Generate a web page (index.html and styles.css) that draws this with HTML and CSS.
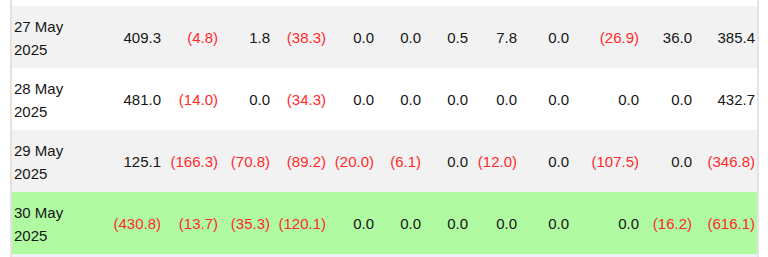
FILE: index.html
```html
<!DOCTYPE html>
<html lang="en">
<head>
<meta charset="utf-8">
<title>Daily table</title>
<link rel="stylesheet" href="styles.css">
</head>
<body>
<div class="table">
  <div class="row alt">
    <div class="date">27 May<br>2025</div>
    <div>409.3</div><div class="neg">(4.8)</div><div>1.8</div><div class="neg">(38.3)</div><div>0.0</div><div>0.0</div><div>0.5</div><div>7.8</div><div>0.0</div><div class="neg">(26.9)</div><div>36.0</div><div>385.4</div>
  </div>
  <div class="row">
    <div class="date">28 May<br>2025</div>
    <div>481.0</div><div class="neg">(14.0)</div><div>0.0</div><div class="neg">(34.3)</div><div>0.0</div><div>0.0</div><div>0.0</div><div>0.0</div><div>0.0</div><div>0.0</div><div>0.0</div><div>432.7</div>
  </div>
  <div class="row alt">
    <div class="date">29 May<br>2025</div>
    <div>125.1</div><div class="neg">(166.3)</div><div class="neg">(70.8)</div><div class="neg">(89.2)</div><div class="neg">(20.0)</div><div class="neg">(6.1)</div><div>0.0</div><div class="neg">(12.0)</div><div>0.0</div><div class="neg">(107.5)</div><div>0.0</div><div class="neg">(346.8)</div>
  </div>
  <div class="row hl">
    <div class="date">30 May<br>2025</div>
    <div class="neg">(430.8)</div><div class="neg">(13.7)</div><div class="neg">(35.3)</div><div class="neg">(120.1)</div><div>0.0</div><div>0.0</div><div>0.0</div><div>0.0</div><div>0.0</div><div>0.0</div><div class="neg">(16.2)</div><div class="neg">(616.1)</div>
  </div>
  <div class="row next"></div>
</div>
</body>
</html>
```
FILE: styles.css
```css
html, body {
  margin: 0;
  padding: 0;
  background: #ffffff;
}

body {
  font-family: "Liberation Sans", Arial, sans-serif;
  font-size: 15px;
  color: #161616;
}

.table {
  margin-left: 10px;
  width: 745px;
  padding-top: 6px;
  border-left: 2px solid #e6e2dd;
  border-right: 2px solid #e4e4e4;
}

.row {
  display: grid;
  grid-template-columns: 88px 63px 57px 52px 56px 48px 47px 47px 49px 52px 70px 53px 63px;
  height: 62px;
  align-items: center;
  line-height: 23px;
  background: #ffffff;
}

.row > div {
  text-align: right;
  padding-right: 2px;
  white-space: nowrap;
}

.row > .date {
  text-align: left;
  padding-left: 2px;
  padding-top: 2px;
}

.row.alt {
  background: #f2f2f2;
}

.row.hl {
  background: #b0faa2;
}

.row.next {
  height: 3px;
  background: #eef0f7;
}

.neg {
  color: #ff2a2a;
}
```
